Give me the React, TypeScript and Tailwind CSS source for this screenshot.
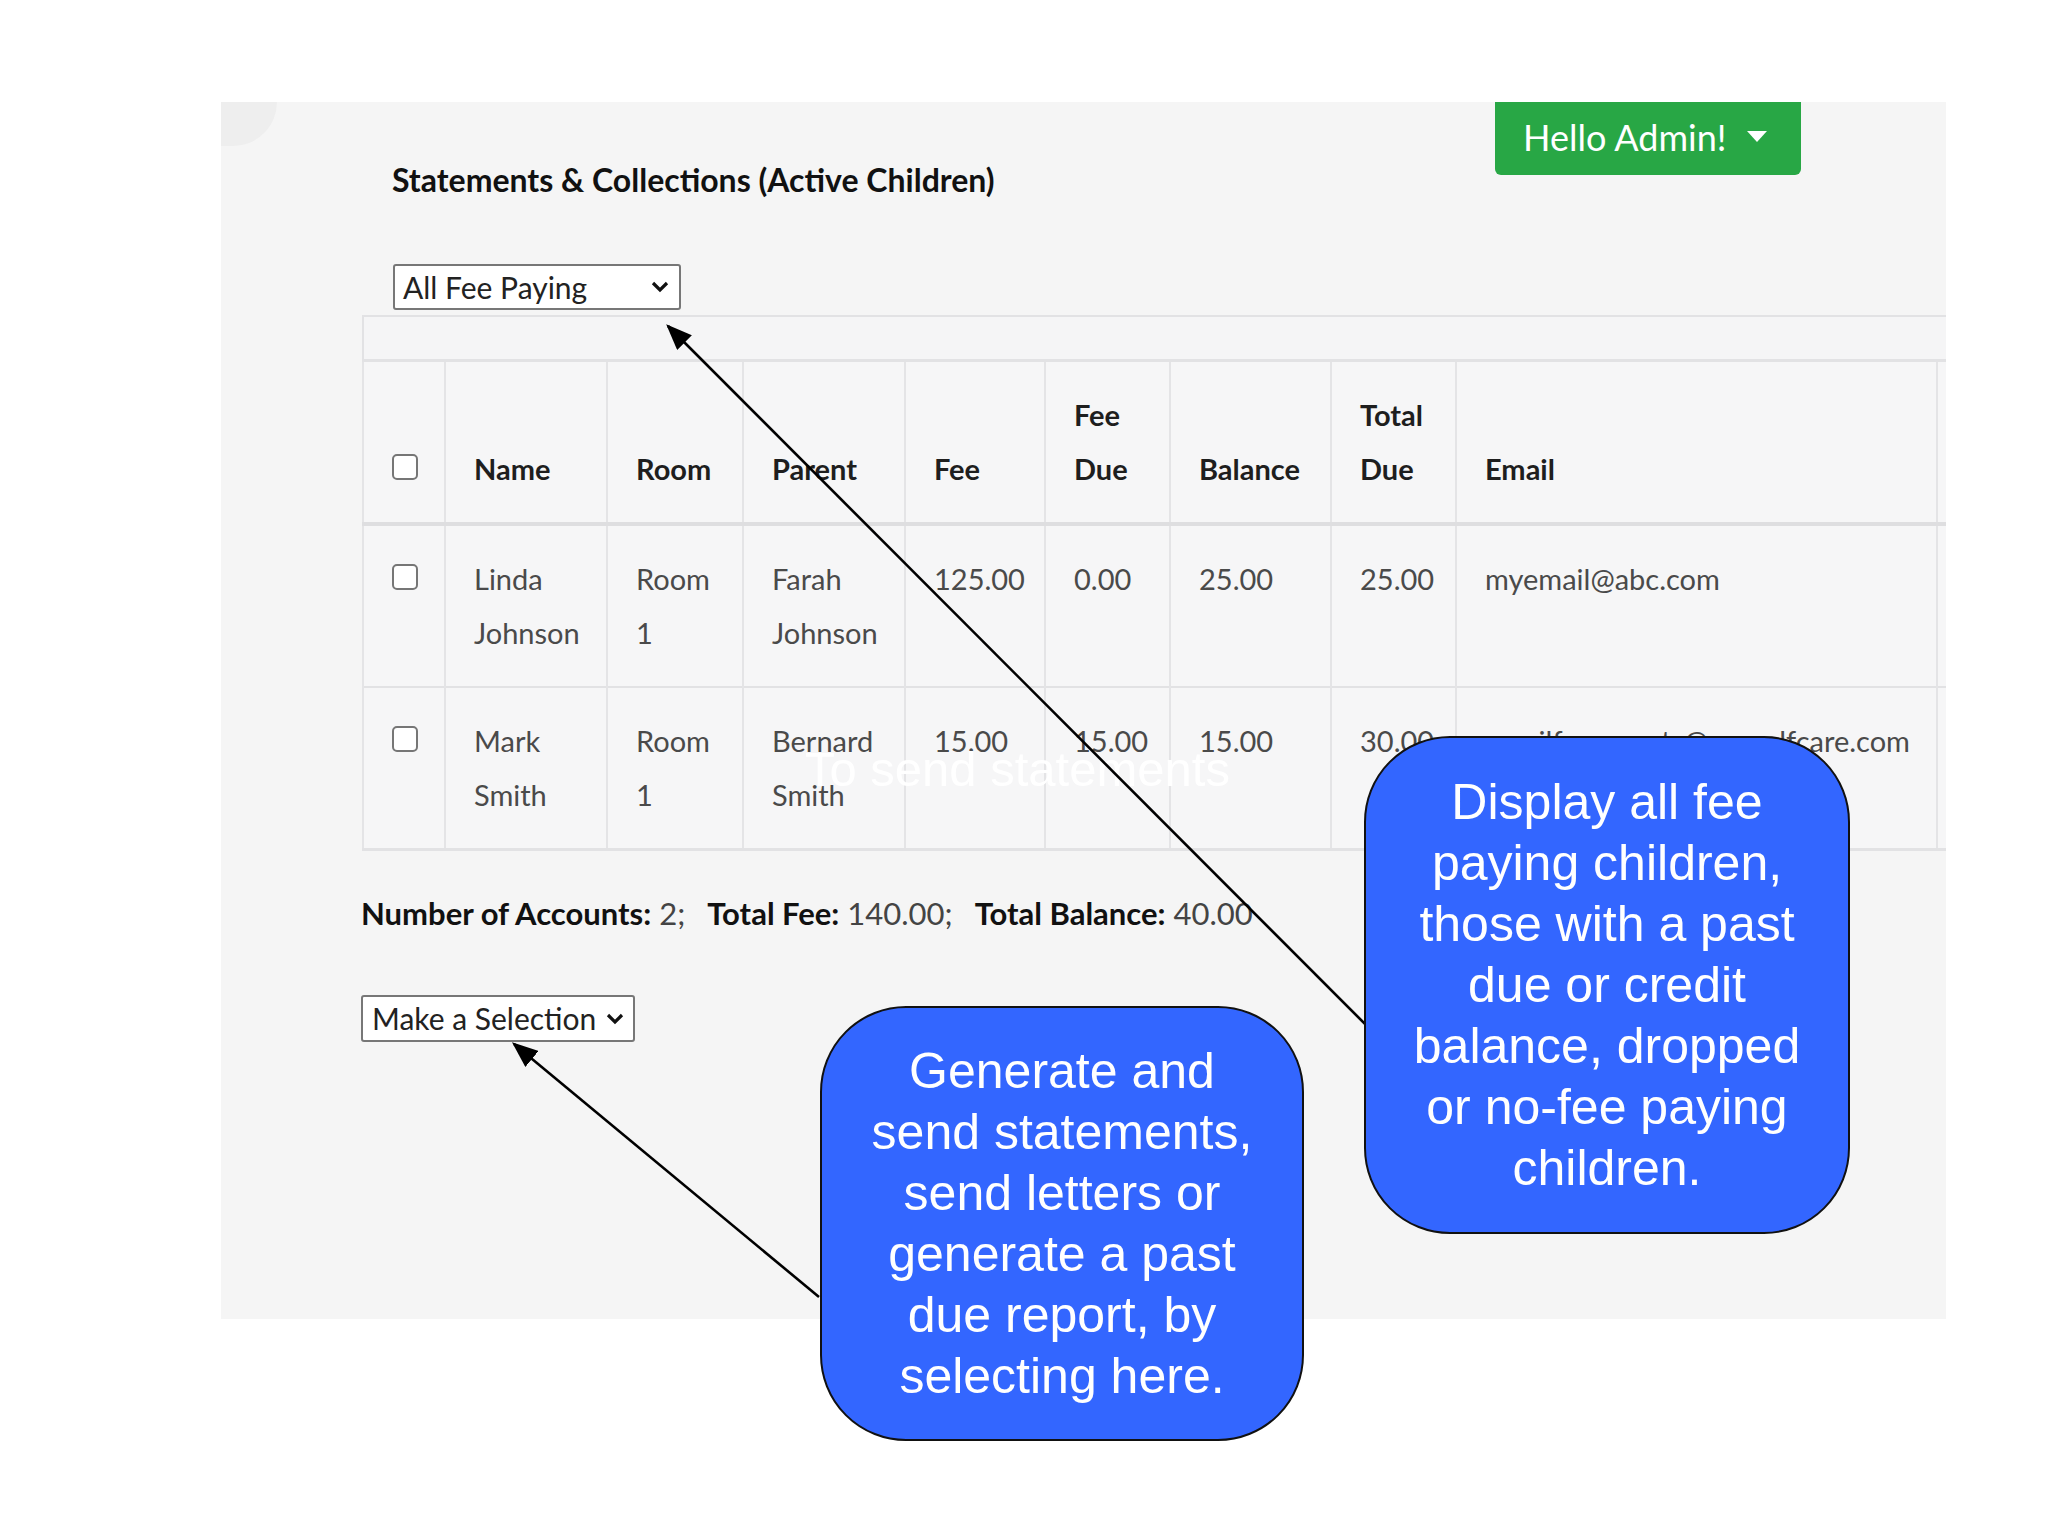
const rows = [
  {
    name: ["Linda", "Johnson"],
    room: ["Room", "1"],
    parent: ["Farah", "Johnson"],
    fee: "125.00",
    feeDue: "0.00",
    balance: "25.00",
    totalDue: "25.00",
    email: "myemail@abc.com",
  },
  {
    name: ["Mark", "Smith"],
    room: ["Room", "1"],
    parent: ["Bernard", "Smith"],
    fee: "15.00",
    feeDue: "15.00",
    balance: "15.00",
    totalDue: "30.00",
    email: "emailforparents@ourselfcare.com",
  },
]

const colWidths = [82, 162, 136, 162, 140, 125, 161, 125, 481, 126]

function Checkbox({ className = "" }: { className?: string }) {
  return (
    <span
      className={
        "block w-[26px] h-[26px] border-2 border-[#767676] rounded-[5px] bg-white " + className
      }
    />
  )
}

function Chevron() {
  return (
    <svg width="18" height="12" viewBox="0 0 18 12" className="shrink-0">
      <polyline points="2,2 9,9 16,2" fill="none" stroke="#111" strokeWidth="3.2" />
    </svg>
  )
}

function Lines({ parts }: { parts: string[] }) {
  return (
    <>
      {parts.map((p, i) => (
        <span key={i} className="block">
          {p}
        </span>
      ))}
    </>
  )
}

export default function App() {
  const th =
    "align-bottom text-left px-7 py-[26px] leading-[54px] font-bold text-[#1e1e1e] border-l-2 border-[#e4e4e6]"
  const td =
    "align-top text-left px-7 py-[26px] leading-[54px] text-[#4a4a4a] border-l-2 border-[#e4e4e6]"

  return (
    <div className="relative w-[2048px] h-[1536px] overflow-hidden bg-white font-['Lato',sans-serif]">
      <div className="relative ml-[221px] mt-[102px] w-[1725px] h-[1217px] overflow-hidden bg-[#f5f5f5]">
        <div className="absolute left-0 top-0 w-[56px] h-[44px] rounded-br-[60px] bg-[#eeeeee]" />

        <div className="relative flex items-start justify-between">
          <h2 className="mt-[59px] ml-[171px] text-[32px] leading-[38px] font-bold text-[#111]">
            Statements &amp; Collections (Active Children)
          </h2>
          <button className="mr-[145px] h-[73px] w-[306px] flex items-center gap-[20px] pl-[28px] pb-[4px] rounded-b-[6px] bg-[#28a745] text-white text-[36px]">
            <span>Hello Admin!</span>
            <svg width="20" height="11" viewBox="0 0 20 11">
              <polygon points="0,0 20,0 10,11" fill="white" />
            </svg>
          </button>
        </div>

        <div className="mt-[65px] ml-[172px] w-[288px] h-[46px] flex items-center justify-between pl-[8px] pr-[10px] border-2 border-[#777] rounded-[3px] bg-white text-[30px] text-[#222]">
          <span>All Fee Paying</span>
          <Chevron />
        </div>

        <div className="mt-[5px] ml-[141px] w-[1700px]">
          <div className="h-[47px] border-t-2 border-b-[3px] border-l-2 border-[#e2e2e4] bg-[#f5f5f6]" />
          <table className="w-[1700px] table-fixed border-collapse text-[29px] bg-[#f6f6f7] border-l-2 border-b-[3px] border-[#e2e2e4]">
            <colgroup>
              {colWidths.map((w, i) => (
                <col key={i} style={{ width: w }} />
              ))}
            </colgroup>
            <thead>
              <tr className="border-b-4 border-[#dedee0]">
                <th className={th + " border-l-0"}>
                  <Checkbox className="mb-[16px]" />
                </th>
                <th className={th}>Name</th>
                <th className={th}>Room</th>
                <th className={th}>Parent</th>
                <th className={th}>Fee</th>
                <th className={th}>
                  <Lines parts={["Fee", "Due"]} />
                </th>
                <th className={th}>Balance</th>
                <th className={th}>
                  <Lines parts={["Total", "Due"]} />
                </th>
                <th className={th}>Email</th>
                <th className={th}></th>
              </tr>
            </thead>
            <tbody>
              {rows.map((r, i) => (
                <tr key={i} className={i < rows.length - 1 ? "border-b-2 border-[#e2e2e4]" : ""}>
                  <td className={td + " border-l-0"}>
                    <Checkbox className="mt-[12px]" />
                  </td>
                  <td className={td}>
                    <Lines parts={r.name} />
                  </td>
                  <td className={td}>
                    <Lines parts={r.room} />
                  </td>
                  <td className={td}>
                    <Lines parts={r.parent} />
                  </td>
                  <td className={td + " whitespace-nowrap"}>{r.fee}</td>
                  <td className={td + " whitespace-nowrap"}>{r.feeDue}</td>
                  <td className={td + " whitespace-nowrap"}>{r.balance}</td>
                  <td className={td + " whitespace-nowrap"}>{r.totalDue}</td>
                  <td className={td + " whitespace-nowrap"}>{r.email}</td>
                  <td className={td}></td>
                </tr>
              ))}
            </tbody>
          </table>
        </div>

        <p className="mt-[44px] ml-[140px] text-[31px] leading-[37px] text-[#444] whitespace-nowrap">
          <b className="text-[#111]">Number of Accounts:</b> 2;
          <span className="ml-[22px]" />
          <b className="text-[#111]">Total Fee:</b> 140.00;
          <span className="ml-[22px]" />
          <b className="text-[#111]">Total Balance:</b> 40.00
        </p>

        <div className="mt-[63px] ml-[140px] w-[274px] h-[47px] flex items-center justify-between pl-[9px] pr-[9px] border-2 border-[#777] rounded-[3px] bg-white text-[30px] text-[#222]">
          <span>Make a Selection</span>
          <Chevron />
        </div>
      </div>

      <div className="absolute left-[805px] top-[745px] text-[49px] leading-[49px] whitespace-nowrap text-white font-['Liberation_Sans',Arial,sans-serif]">
        To send statements
      </div>

      <svg className="absolute left-0 top-0" width="2048" height="1536" viewBox="0 0 2048 1536">
        <defs>
          <marker id="head" markerWidth="10" markerHeight="8" refX="9" refY="4" orient="auto" markerUnits="strokeWidth">
            <polygon points="0,0 10,4 0,8" fill="#000" />
          </marker>
        </defs>
        <line x1="1382" y1="1041" x2="668" y2="326" stroke="#000" strokeWidth="2.6" markerEnd="url(#head)" />
        <line x1="819" y1="1297" x2="514" y2="1044" stroke="#000" strokeWidth="2.6" markerEnd="url(#head)" />
      </svg>

      <div className="absolute left-[1364px] top-[736px] w-[486px] h-[498px] flex items-center justify-center rounded-[86px] border-2 border-[#111] bg-[#3366ff] text-white text-center text-[50px] leading-[61px] font-['Liberation_Sans',Arial,sans-serif]">
        <p>
          Display all fee
          <br />
          paying children,
          <br />
          those with a past
          <br />
          due or credit
          <br />
          balance, dropped
          <br />
          or no-fee paying
          <br />
          children.
        </p>
      </div>

      <div className="absolute left-[820px] top-[1006px] w-[484px] h-[435px] flex items-center justify-center rounded-[86px] border-2 border-[#111] bg-[#3366ff] text-white text-center text-[50px] leading-[61px] font-['Liberation_Sans',Arial,sans-serif]">
        <p>
          Generate and
          <br />
          send statements,
          <br />
          send letters or
          <br />
          generate a past
          <br />
          due report, by
          <br />
          selecting here.
        </p>
      </div>
    </div>
  )
}
